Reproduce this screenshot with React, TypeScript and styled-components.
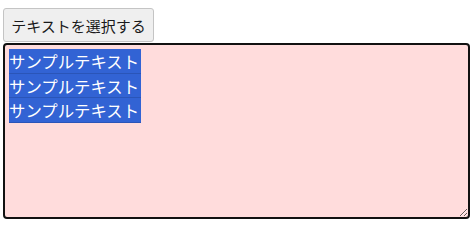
import React from "react";
import styled, { createGlobalStyle } from "styled-components";

const Global = createGlobalStyle`
  html, body { margin: 0; padding: 0; background: #fff; }
  body { font-family: "Noto Sans CJK JP", "Noto Sans", sans-serif; }
`;

const Page = styled.div`
  display: flex;
  flex-direction: column;
  align-items: flex-start;
  gap: 1px;
  padding: 8px 0 0 3px;
`;

const Button = styled.button`
  box-sizing: border-box;
  width: 151px;
  height: 34px;
  padding: 0 6px;
  background: #efefef;
  border: 1px solid #c4c4c4;
  border-radius: 3px;
  color: #1a1a1a;
  font-family: "Noto Sans CJK JP", sans-serif;
  font-size: 15px;
  line-height: 1;
  white-space: nowrap;
`;

const Area = styled.div`
  box-sizing: border-box;
  width: 467px;
  height: 176px;
  padding: 4px;
  background: #ffdcdc;
  border: 2px solid #111;
  border-radius: 4px;
  overflow: auto;
  resize: both;
  display: flex;
  flex-direction: column;
  align-items: flex-start;
`;

const Line = styled.span`
  display: block;
  height: 24.6px;
  line-height: 24.6px;
  padding-right: 2px;
  background: #3263d4;
  color: #fff;
  font-family: "Noto Sans CJK JP", sans-serif;
  font-size: 16.4px;
  white-space: nowrap;
  box-shadow: inset 0 -1px 0 #2a55b8;
`;

export default function App() {
  const lines = ["サンプルテキスト", "サンプルテキスト", "サンプルテキスト"];
  return (
    <>
      <Global />
      <Page>
        <Button>テキストを選択する</Button>
        <Area>
          {lines.map((l, i) => (
            <Line key={i}>{l}</Line>
          ))}
        </Area>
      </Page>
    </>
  );
}
